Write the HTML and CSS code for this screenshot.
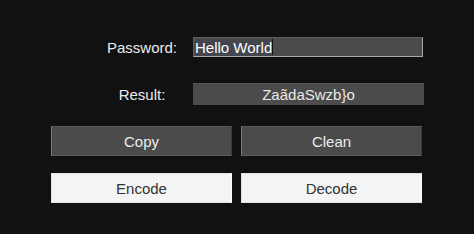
FILE: index.html
```html
<!DOCTYPE html>
<html lang="en">
<head>
    <meta charset="UTF-8">
    <meta name="viewport" content="width=device-width, initial-scale=1.0">
    <title>Password Encoder</title>
    <link rel="stylesheet" href="styles.css">
</head>
<body>
    <main class="panel">
        <div class="field_row">
            <label class="label" for="password">Password:</label>
            <div class="input"><span class="typed">Hello World</span><span class="caret"></span></div>
        </div>
        <div class="field_row result_row">
            <span class="label">Result:</span>
            <div class="result">ZaãdaSwzb}o</div>
        </div>
        <div class="button_row">
            <button type="button" class="btn dark">Copy</button>
            <button type="button" class="btn dark">Clean</button>
        </div>
        <div class="button_row">
            <button type="button" class="btn light">Encode</button>
            <button type="button" class="btn light">Decode</button>
        </div>
    </main>
</body>
</html>
```
FILE: styles.css
```css
body {
    margin: 0;
    background-color: #111111;
    font-family: "Liberation Sans", Arial, sans-serif;
    font-size: 15px;
    color: #ececec;
}
.panel {
    width: 372px;
    margin: 0 auto;
    padding-top: 37px;
    display: flex;
    flex-direction: column;
}
.field_row {
    display: grid;
    grid-template-columns: 142px 1fr;
    align-items: center;
}
.result_row {
    margin-top: 26px;
}
.label {
    padding-left: 40px;
    text-align: center;
    color: #ececec;
}
.input {
    box-sizing: border-box;
    height: 20px;
    width: 230px;
    background-color: #4b4b4b;
    border: 1px solid #5e5e5e;
    border-right-color: #a8a8a8;
    border-bottom-color: #a8a8a8;
    padding: 0 1px;
    display: flex;
    align-items: center;
    color: #ffffff;
}
.typed {
    background-color: #454550;
    line-height: 17px;
}
.caret {
    display: inline-block;
    width: 1px;
    height: 16px;
    background-color: #111;
}
.result {
    box-sizing: border-box;
    height: 22px;
    width: 231px;
    line-height: 22px;
    background-color: #4b4b4b;
    border-top: 1px solid #555;
    text-align: center;
    color: #e8e8e8;
}
.button_row {
    display: grid;
    grid-template-columns: 181px 181px;
    column-gap: 9px;
    margin-top: 21px;
}
.button_row + .button_row {
    margin-top: 17px;
}
.btn {
    height: 30px;
    font-family: "Liberation Sans", Arial, sans-serif;
    font-size: 15px;
    padding: 0;
    border-radius: 0;
}
.dark {
    background-color: #4b4b4b;
    color: #ececec;
    border: 1px solid #3a3a3a;
    border-left-color: #7a7a7a;
    border-top-color: #5a5a5a;
    border-bottom-color: #5c5c5c;
}
.light {
    background-color: #f4f4f4;
    color: #333333;
    border: 1px solid #e0e0e0;
    border-right-color: #ffffff;
}
```
